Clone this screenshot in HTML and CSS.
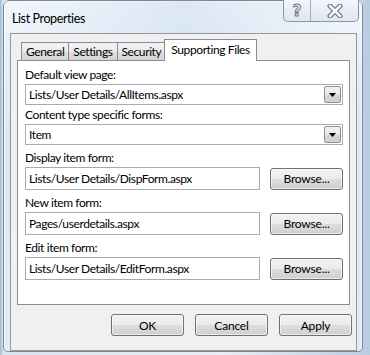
FILE: index.html
```html
<!DOCTYPE html>
<html lang="en">

<head>
    <meta charset="utf-8">
    <title>List Properties</title>
    <link rel="stylesheet" href="styles.css">
</head>

<body>
    <div class="window">
        <div class="titlebar">
            <span class="title">List Properties</span>
            <div class="caption">
                <span class="cap help">?</span>
                <span class="cap close">
                    <svg width="18" height="14" viewBox="0 0 18 14">
                        <path d="M4 2 L14 12 M14 2 L4 12" stroke="#6c7784" stroke-width="5" stroke-linecap="round" fill="none" />
                        <path d="M4 2 L14 12 M14 2 L4 12" stroke="#f4f7fb" stroke-width="2.6" stroke-linecap="round" fill="none" />
                    </svg>
                </span>
            </div>
        </div>

        <div class="client">
            <!-- faner -->
            <div class="tabs">
                <span class="tab">General</span>
                <span class="tab">Settings</span>
                <span class="tab">Security</span>
                <span class="tab selected">Supporting Files</span>
            </div>

            <div class="panel">
                <div class="field">
                    <label>Default view page:</label>
                    <div class="combo">
                        <span>Lists/User Details/AllItems.aspx</span>
                        <span class="drop"><svg width="7" height="4" viewBox="0 0 7 4"><path d="M0 0 H7 L3.5 4 Z" fill="#000" /></svg></span>
                    </div>
                </div>
                <div class="field">
                    <label>Content type specific forms:</label>
                    <div class="combo">
                        <span>Item</span>
                        <span class="drop"><svg width="7" height="4" viewBox="0 0 7 4"><path d="M0 0 H7 L3.5 4 Z" fill="#000" /></svg></span>
                    </div>
                </div>
                <div class="field spaced">
                    <label>Display item form:</label>
                    <div class="row">
                        <div class="textbox">Lists/User Details/DispForm.aspx</div>
                        <button>Browse...</button>
                    </div>
                </div>
                <div class="field spaced">
                    <label>New item form:</label>
                    <div class="row">
                        <div class="textbox">Pages/userdetails.aspx</div>
                        <button>Browse...</button>
                    </div>
                </div>
                <div class="field spaced">
                    <label>Edit item form:</label>
                    <div class="row">
                        <div class="textbox">Lists/User Details/EditForm.aspx</div>
                        <button>Browse...</button>
                    </div>
                </div>
            </div>

            <div class="actions">
                <button>OK</button>
                <button>Cancel</button>
                <button>Apply</button>
            </div>
        </div>
    </div>
</body>

</html>
```

FILE: styles.css
```css
body {
    margin: 0;
    height: 355px;
    overflow: hidden;
    font-family: Lato, 'Open Sans', sans-serif;
    font-size: 12px;
    letter-spacing: -0.4px;
    color: #000;
    background: linear-gradient(90deg, #9fb9d6 0px, #d7e3ef 3px, #e9eef4 60%, #b9cde2 100%);
}

.window {
    margin-left: 3px;
    width: 358px;
    height: 350px;
    border: 1px solid #7e8894;
    border-radius: 7px 7px 5px 5px;
    background: linear-gradient(180deg, #eef4fa 0%, #dbe7f3 40%, #e3ecf5 100%);
    box-shadow: inset 0 0 0 1px rgba(255, 255, 255, 0.7);
    display: flex;
    flex-direction: column;
}

.titlebar {
    height: 32px;
    display: flex;
    justify-content: space-between;
    align-items: flex-start;
    background: linear-gradient(90deg, rgba(255, 255, 255, 0.2), rgba(190, 210, 235, 0.35) 50%, rgba(255, 255, 255, 0.3));
}

.title {
    margin: 10px 0 0 8px;
    font-size: 12.5px;
    line-height: 16px;
}

.caption {
    display: flex;
    margin-top: -1px;
    margin-right: 3px;
    border: 1px solid #8a96a4;
    border-top: none;
    border-radius: 0 0 5px 5px;
    background: linear-gradient(180deg, #f3f6fa, #dfe7f0);
    height: 21px;
}

.cap {
    display: flex;
    align-items: center;
    justify-content: center;
}

.help {
    width: 26px;
    border-right: 1px solid #a5afba;
    font-family: 'DejaVu Sans', sans-serif;
    font-size: 15px;
    font-weight: bold;
    letter-spacing: 0;
    color: #f4f7fb;
    -webkit-text-stroke: 1px #6c7784;
}

.close {
    width: 47px;
}

.client {
    margin: 0 5px 0 6px;
    height: 310px;
    border: 1px solid #8e99a6;
    background: #f0f0f0;
    padding: 6px 6px 0 6px;
}

.tabs {
    display: flex;
    align-items: flex-end;
    padding-left: 4px;
    height: 20px;
}

.tab {
    height: 17px;
    line-height: 18px;
    padding: 0 4px;
    border: 1px solid #898c95;
    border-bottom: none;
    margin-right: -1px;
    background: linear-gradient(180deg, #f3f3f3 0%, #ebebeb 50%, #dedede 51%, #d6d6d6 100%);
}

.tab.selected {
    position: relative;
    z-index: 1;
    height: 21px;
    line-height: 19px;
    margin: 0 -2px -1px -1px;
    padding: 0 6px;
    background: #fff;
}

.panel {
    height: 238px;
    border: 1px solid #898c95;
    background: #fff;
    padding: 5px 6px 0 7px;
    display: flex;
    flex-direction: column;
}

.field label {
    display: block;
    line-height: 17px;
    margin-bottom: 1px;
}

.field + .field {
    margin-top: 1px;
}

.field.spaced {
    margin-top: 4px;
}

.combo {
    height: 19px;
    border: 1px solid #a5acb5;
    display: flex;
    align-items: center;
    justify-content: space-between;
    padding-left: 3px;
}

.drop {
    width: 15px;
    height: 15px;
    margin-right: 1px;
    border: 1px solid #8e9297;
    border-radius: 2px;
    background: linear-gradient(180deg, #f2f2f2 0%, #e8e8e8 50%, #d6d6d6 51%, #cfcfcf 100%);
    display: flex;
    align-items: center;
    justify-content: center;
}

.row {
    display: flex;
    align-items: center;
    gap: 10px;
}

.textbox {
    flex: 1;
    height: 21px;
    line-height: 21px;
    border: 1px solid #a5acb5;
    padding-left: 3px;
}

button {
    width: 73px;
    height: 22px;
    padding: 0;
    font-family: Lato, 'Open Sans', sans-serif;
    font-size: 12px;
    letter-spacing: -0.2px;
    color: #000;
    border: 1px solid #707070;
    border-radius: 3px;
    background: linear-gradient(180deg, #f2f2f2 0%, #ebebeb 50%, #dddddd 51%, #cfcfcf 100%);
    box-shadow: inset 0 0 0 1px rgba(255, 255, 255, 0.6);
}

.actions {
    display: flex;
    justify-content: flex-end;
    gap: 11px;
    margin: 9px -2px 0 0;
}
```
